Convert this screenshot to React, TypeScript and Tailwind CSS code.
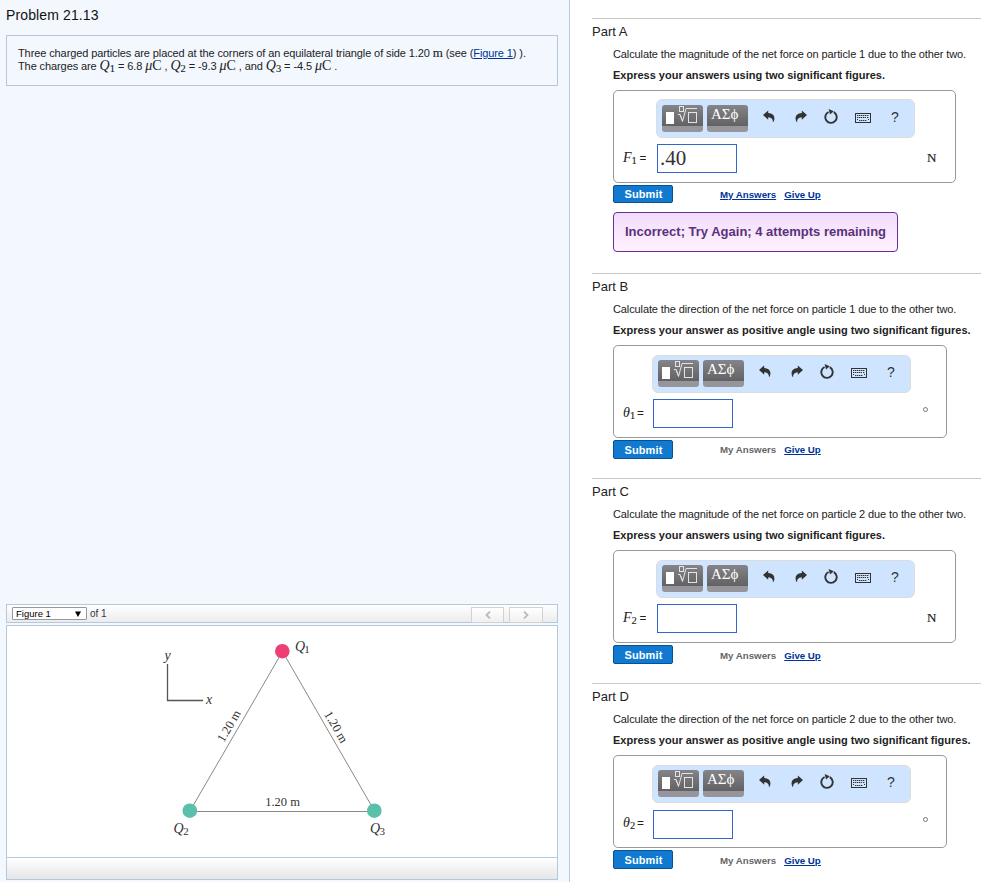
import React from "react";

const SERIF = "font-['Liberation_Serif',serif]";

function MathVar({ name, sub }: { name: string; sub: string }) {
  return (
    <span className={`${SERIF} text-[14px] leading-none tracking-normal`}>
      <i>{name}</i>
      <span className="relative top-[2px] text-[10.5px] [-webkit-text-stroke:0.12px]">{sub}</span>
    </span>
  );
}

function MicroC() {
  return (
    <span className={`${SERIF} text-[14px] leading-none tracking-normal`}>
      <i>μ</i>C
    </span>
  );
}

function TemplateIcon() {
  return (
    <svg width="41" height="27" viewBox="0 0 41 27" fill="none">
      <rect x="4" y="7" width="8" height="12" fill="#fff" />
      <g stroke="#e4e4e6" strokeWidth="1">
        <rect x="17.5" y="1.500" width="4" height="5" />
        <path d="M16 9.500h2l2.500 7 3.500-13h11" />
        <path d="M18 9.500l2.500 6" />
        <rect x="26.5" y="7.500" width="8" height="10" />
      </g>
    </svg>
  );
}

function UndoIcon({ flip }: { flip?: boolean }) {
  return (
    <svg width="12" height="13" viewBox="0 0 12 13" className={flip ? "-scale-x-100" : ""}>
      <path d="M0 5 5.2.4v2.600C9.200 3.100 11.700 5.400 11.400 9c-.1 1.400-.7 2.600-1.500 3.300C10.200 9.200 8.600 7.300 5.200 7.200v2.600z" fill="#333" />
    </svg>
  );
}

function ResetIcon() {
  return (
    <svg width="14" height="15" viewBox="0 0 14 15" fill="none">
      <path d="M9.800 3.200A5.700 5.700 0 1 1 4.600 3" stroke="#333" strokeWidth="1.900" />
      <path d="M4.600 0 9.800 2.200 6 5.600z" fill="#333" />
    </svg>
  );
}

function KeyboardIcon() {
  return (
    <svg width="16" height="10" viewBox="0 0 16 10" fill="none">
      <rect x=".5" y=".5" width="15" height="9" stroke="#333" />
      <path d="M2 2.500h12M2 4.500h9M12 4.500h2M2 6.500h1M4 7.500h8M13 6.500h1" stroke="#333" strokeDasharray="1.400 .6" />
    </svg>
  );
}

function Toolbar({ tall }: { tall?: boolean }) {
  return (
    <div
      className={`flex w-[259px] rounded-[6px] border border-[#dcdcdc] bg-[#cfe5ff] pl-[5px] ${
        tall ? "mt-[8px] h-[39px] pt-[5px]" : "mt-[9px] h-[38px] pt-[4px]"
      }`}
    >
      <div className="box-content h-[21px] w-[41px] rounded-[3px] border-b-[6px] border-[#96959b] bg-linear-to-b from-[#858589] to-[#626264]">
        <TemplateIcon />
      </div>
      <div
        className={`ml-[4px] box-content h-[21px] w-[41px] rounded-[3px] border-b-[6px] border-[#96959b] bg-linear-to-b from-[#858589] to-[#626264] ${SERIF} text-[15px] leading-[19px] text-white`}
      >
        <span className="ml-[4px]">ΑΣϕ</span>
      </div>
      <div className="ml-[15px] mt-[5px] flex w-[138px]">
        <UndoIcon />
        <span className="ml-[20px]"><UndoIcon flip /></span>
        <span className="ml-[17px] -mt-px"><ResetIcon /></span>
        <span className="ml-[17px] mt-[3px]"><KeyboardIcon /></span>
        <span className="ml-[20px] mt-[-1px] text-[14px] leading-[16px] text-[#333]">?</span>
      </div>
    </div>
  );
}

type PartProps = {
  title: string;
  text: string;
  express: string;
  symbol: string;
  sub: string;
  angle?: boolean;
  value?: string;
  answered?: boolean;
  linksTop?: string;
  inputTop?: string;
};

function Part({ title, text, express, symbol, sub, angle, value, answered, linksTop = "mt-px", inputTop = "mt-[6px]" }: PartProps) {
  return (
    <section className={`border-t border-[#c8c8c8] ${answered ? "h-[255px]" : "h-[205px]"}`}>
      <h2 className="h-[27px] pt-[4px] text-[13px] leading-[18px] text-[#222]">{title}</h2>
      <div className="pl-[21px]">
        <p className="h-[21px] whitespace-nowrap text-[11px] leading-[17px] tracking-[-0.11px] text-[#222]">{text}</p>
        <p className="h-[23px] whitespace-nowrap text-[11px] font-bold leading-[17px] text-[#222]">{express}</p>
        <div className={`flex h-[93px] rounded-[5px] border border-[#999] ${angle ? "w-[334px]" : "w-[343px]"}`}>
          <div className={`shrink-0 whitespace-nowrap pl-[9px] pt-[58px] leading-[16px] text-[#222] ${angle ? "w-[38px]" : "w-[42px]"}`}>
            <MathVar name={symbol} sub={sub} />
            <span className={`text-[11px] [-webkit-text-stroke:0.2px] ${angle ? "ml-[2px]" : "ml-[3px]"}`}>=</span>
          </div>
          <div className="w-[259px] shrink-0">
            <Toolbar tall={answered} />
            <div className={`ml-[1px] h-[29px] w-[80px] border border-[#3366cc] pl-[2px] ${inputTop} ${SERIF} text-[21px] leading-[27px] text-[#333]`}>
              {value}
            </div>
          </div>
          <div className={`pl-[12px] ${SERIF} text-[#222]`}>
            {angle ? (
              <div className="mt-[61px] h-[5px] w-[5px] rounded-full border border-[#777]" />
            ) : (
              <div className="mt-[59px] text-[13px] leading-[16px] [-webkit-text-stroke:0.2px]">N</div>
            )}
          </div>
        </div>
        <div className="mt-[2px] flex h-[19px] text-[9.7px] font-bold leading-[18px]">
          <button className={`w-[60px] rounded-[2px] border border-[#075292] bg-[#117ad0] pl-px text-[11px] leading-[16px] tracking-[0.1px] text-white ${answered ? "h-[18px]" : "h-[19px]"}`}>Submit</button>
          <span className={`ml-[47px] whitespace-nowrap ${linksTop} ${answered ? "text-[#003399] underline" : "text-[#666]"}`}>My Answers</span>
          <a className={`ml-[8px] whitespace-nowrap text-[#003399] underline ${linksTop}`}>Give Up</a>
        </div>
        {answered && (
          <div className="mt-[8px] h-[40px] w-[285px] whitespace-nowrap rounded-[4px] border border-[#663090] bg-linear-to-b from-[#f2dcfb] to-[#fff2ff] pl-[11px] text-[13px] font-bold leading-[37px] text-[#59327a]">
            Incorrect; Try Again; 4 attempts remaining
          </div>
        )}
      </div>
    </section>
  );
}

function Triangle() {
  return (
    <svg width="550" height="231" viewBox="7 626 550 231" className={SERIF} fill="#333">
      <g stroke="#888" fill="none">
        <path d="M282.500 651.500 190 811M282.500 651.500 374.500 811M190 811.500h184" />
        <path d="M167.500 664v36.500H203" stroke="#555" strokeWidth="1.300" />
      </g>
      <circle cx="282.300" cy="651.200" r="7.300" fill="#ee3f74" />
      <circle cx="189.800" cy="810.700" r="7.300" fill="#5bc0aa" />
      <circle cx="374.300" cy="810.700" r="7.300" fill="#5bc0aa" />
      <g fontSize="14" fontStyle="italic">
        <text x="164.500" y="660">y</text>
        <text x="206" y="704">x</text>
        <text x="295" y="651">Q</text>
        <text x="173.500" y="833">Q</text>
        <text x="370" y="833">Q</text>
      </g>
      <g fontSize="11">
        <text x="304.200" y="653">1</text>
        <text x="183.200" y="835">2</text>
        <text x="379.500" y="835">3</text>
      </g>
      <g fontSize="12.500" textAnchor="middle">
        <text x="282.500" y="806">1.20 m</text>
        <text transform="translate(232.500 728) rotate(-60)">1.20 m</text>
        <text transform="translate(332.500 729) rotate(60)">1.20 m</text>
      </g>
    </svg>
  );
}

function NavButton({ d, className }: { d: string; className: string }) {
  return (
    <div className={`flex h-[16px] items-center justify-center border border-[#d2d2d2] bg-linear-to-b from-white to-[#f0f0f0] ${className}`}>
      <svg width="6" height="8" viewBox="0 0 6 8" fill="none">
        <path d={d} stroke="#bbb" strokeWidth="1.800" />
      </svg>
    </div>
  );
}

export default function App() {
  return (
    <div className="flex h-[882px] w-[981px] overflow-hidden bg-white font-['Liberation_Sans',Arial,sans-serif]">
      <aside className="flex w-[570px] shrink-0 flex-col border-r border-[#b9cadc] bg-[#f3f8ff] pl-[6px] pr-[11px]">
        <h1 className="h-[35px] pt-[6px] text-[14px] leading-[18px] tracking-[0.12px] text-[#111]">Problem 21.13</h1>
        <div className="h-[51px] w-[552px] whitespace-nowrap border border-[#b5c7d8] pl-[11px] pt-[10px] text-[11px] tracking-[-0.1px] text-[#222]">
          <div className="h-[13px] leading-[13px]">
            Three charged particles are placed at the corners of an equilateral triangle of side 1.20{" "}
            <span className={`${SERIF} text-[13px] leading-none [-webkit-text-stroke:0.15px]`}>m</span> (see (<a className="text-[#003399] underline">Figure 1</a>) ).
          </div>
          <div className="h-[13px] leading-[13px]">
            The charges are <MathVar name="Q" sub="1" /> = 6.8 <MicroC /> , <MathVar name="Q" sub="2" /> = -9.3 <MicroC /> , and{" "}
            <MathVar name="Q" sub="3" /> = -4.5 <MicroC /> .
          </div>
        </div>
        <div className="mt-[518px] flex h-[19px] w-[552px] border border-[#b5c9dc] bg-linear-to-b from-white to-[#ececec] pl-[5px] pt-[2px] text-[10px] text-[#334]">
          <div className="flex h-[13px] w-[75px] items-center justify-between rounded-[1px] border border-[#999] bg-white pl-[3px] pr-[5px] text-[9.5px] leading-[11px] text-black">
            <span>Figure 1</span>
            <svg width="6" height="6" viewBox="0 0 6 6"><path d="M0 .5h6L3 6z" /></svg>
          </div>
          <span className="ml-[3px] w-[381px] leading-[13px]">of 1</span>
          <NavButton className="w-[33px]" d="M5 .5 1.500 4 5 7.500" />
          <NavButton className="ml-[5px] w-[34px]" d="M1 .5 4.500 4 1 7.500" />
        </div>
        <div className="mt-[2px] h-[255px] w-[552px] border border-[#b5c9dc] bg-white">
          <Triangle />
          <div className="h-[22px] border-t border-[#b5c9dc] bg-linear-to-b from-white to-[#e6e6e6]" />
        </div>
      </aside>
      <main className="min-w-0 flex-1 pl-[22px] pt-[18px]">
        <Part title="Part A" text="Calculate the magnitude of the net force on particle 1 due to the other two." express="Express your answers using two significant figures." symbol="F" sub="1" value=".40" answered />
        <Part title="Part B" text="Calculate the direction of the net force on particle 1 due to the other two." express="Express your answer as positive angle using two significant figures." symbol="θ" sub="1" angle />
        <Part title="Part C" text="Calculate the magnitude of the net force on particle 2 due to the other two." express="Express your answers using two significant figures." symbol="F" sub="2" linksTop="mt-[2px]" />
        <Part title="Part D" text="Calculate the direction of the net force on particle 2 due to the other two." express="Express your answer as positive angle using two significant figures." symbol="θ" sub="2" angle linksTop="mt-[2px]" inputTop="mt-[7px]" />
      </main>
    </div>
  );
}
